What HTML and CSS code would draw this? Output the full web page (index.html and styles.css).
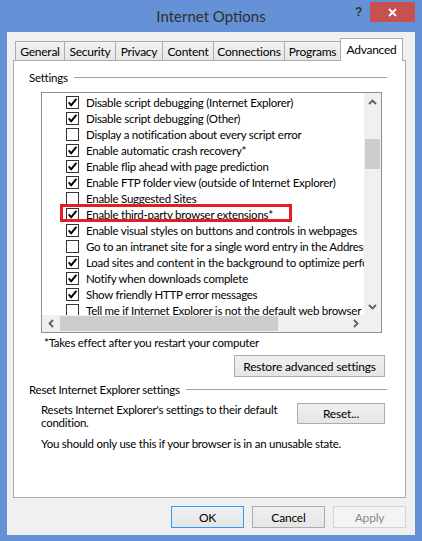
FILE: index.html
```html
<!DOCTYPE html>
<html>
<head>
<meta charset="utf-8">
<link rel="stylesheet" href="styles.css">
</head>
<body>
<div class="titlebar">
  <div></div>
  <div class="title">Internet Options</div>
  <div class="caption-btns">
    <span class="help">?</span>
    <span class="close"><svg width="9" height="9" viewBox="0 0 9 9"><path d="M1 1L8 8M8 1L1 8" stroke="#fff" stroke-width="1.8" fill="none"/></svg></span>
  </div>
</div>
<div class="client">
  <div class="tabs">
    <div class="tab w-general">General</div>
    <div class="tab w-security">Security</div>
    <div class="tab w-privacy">Privacy</div>
    <div class="tab w-content">Content</div>
    <div class="tab w-connections">Connections</div>
    <div class="tab w-programs">Programs</div>
    <div class="tab w-advanced active">Advanced</div>
  </div>
  <div class="panel">
    <div class="group-head"><span>Settings</span><span class="rule"></span></div>
    <div class="listbox">
      <div class="items">
        <div class="item"><span class="cb on"><svg width="11" height="11" viewBox="0 0 11 11"><path d="M1.6 5.4L4.2 8.2L9.4 1.9" stroke="#000" stroke-width="1.9" fill="none"/></svg></span>Disable script debugging (Internet Explorer)</div>
        <div class="item"><span class="cb on"><svg width="11" height="11" viewBox="0 0 11 11"><path d="M1.6 5.4L4.2 8.2L9.4 1.9" stroke="#000" stroke-width="1.9" fill="none"/></svg></span>Disable script debugging (Other)</div>
        <div class="item"><span class="cb"></span>Display a notification about every script error</div>
        <div class="item"><span class="cb on"><svg width="11" height="11" viewBox="0 0 11 11"><path d="M1.6 5.4L4.2 8.2L9.4 1.9" stroke="#000" stroke-width="1.9" fill="none"/></svg></span>Enable automatic crash recovery*</div>
        <div class="item"><span class="cb on"><svg width="11" height="11" viewBox="0 0 11 11"><path d="M1.6 5.4L4.2 8.2L9.4 1.9" stroke="#000" stroke-width="1.9" fill="none"/></svg></span>Enable flip ahead with page prediction</div>
        <div class="item"><span class="cb on"><svg width="11" height="11" viewBox="0 0 11 11"><path d="M1.6 5.4L4.2 8.2L9.4 1.9" stroke="#000" stroke-width="1.9" fill="none"/></svg></span>Enable FTP folder view (outside of Internet Explorer)</div>
        <div class="item"><span class="cb"></span>Enable Suggested Sites</div>
        <div class="item"><span class="cb on"><svg width="11" height="11" viewBox="0 0 11 11"><path d="M1.6 5.4L4.2 8.2L9.4 1.9" stroke="#000" stroke-width="1.9" fill="none"/></svg></span>Enable third-party browser extensions*<span class="mark"></span></div>
        <div class="item"><span class="cb on"><svg width="11" height="11" viewBox="0 0 11 11"><path d="M1.6 5.4L4.2 8.2L9.4 1.9" stroke="#000" stroke-width="1.9" fill="none"/></svg></span>Enable visual styles on buttons and controls in webpages</div>
        <div class="item"><span class="cb"></span>Go to an intranet site for a single word entry in the Address bar</div>
        <div class="item"><span class="cb on"><svg width="11" height="11" viewBox="0 0 11 11"><path d="M1.6 5.4L4.2 8.2L9.4 1.9" stroke="#000" stroke-width="1.9" fill="none"/></svg></span>Load sites and content in the background to optimize performance</div>
        <div class="item"><span class="cb on"><svg width="11" height="11" viewBox="0 0 11 11"><path d="M1.6 5.4L4.2 8.2L9.4 1.9" stroke="#000" stroke-width="1.9" fill="none"/></svg></span>Notify when downloads complete</div>
        <div class="item"><span class="cb on"><svg width="11" height="11" viewBox="0 0 11 11"><path d="M1.6 5.4L4.2 8.2L9.4 1.9" stroke="#000" stroke-width="1.9" fill="none"/></svg></span>Show friendly HTTP error messages</div>
        <div class="item"><span class="cb"></span>Tell me if Internet Explorer is not the default web browser</div>
      </div>
      <div class="vscroll">
        <div class="arrow"><svg width="9" height="6" viewBox="0 0 9 6"><path d="M1 5L4.5 1.5L8 5" stroke="#606060" stroke-width="1.8" fill="none"/></svg></div>
        <div class="vthumb"></div>
        <div class="fill"></div>
        <div class="arrow"><svg width="9" height="6" viewBox="0 0 9 6"><path d="M1 1L4.5 4.5L8 1" stroke="#606060" stroke-width="1.8" fill="none"/></svg></div>
      </div>
      <div class="hscroll">
        <div class="arrow"><svg width="6" height="9" viewBox="0 0 6 9"><path d="M5 1L1.5 4.5L5 8" stroke="#606060" stroke-width="1.8" fill="none"/></svg></div>
        <div class="hthumb"></div>
        <div class="fill"></div>
        <div class="arrow"><svg width="6" height="9" viewBox="0 0 6 9"><path d="M1 1L4.5 4.5L1 8" stroke="#606060" stroke-width="1.8" fill="none"/></svg></div>
      </div>
      <div class="corner"></div>
    </div>
    <div class="note">*Takes effect after you restart your computer</div>
    <div class="btn-row"><button class="btn restore">Restore advanced settings</button></div>
    <div class="group-head reset-head"><span>Reset Internet Explorer settings</span><span class="rule"></span></div>
    <div class="reset-row">
      <div class="reset-text">Resets Internet Explorer's settings to their default<br>condition.</div>
      <button class="btn reset">Reset...</button>
    </div>
    <div class="warn">You should only use this if your browser is in an unusable state.</div>
  </div>
  <div class="dlg-buttons">
    <button class="btn dlg default">OK</button>
    <button class="btn dlg">Cancel</button>
    <button class="btn dlg disabled">Apply</button>
  </div>
</div>
</body>
</html>
```
FILE: styles.css
```css
html, body {
  margin: 0;
  padding: 0;
}
body {
  width: 422px;
  height: 541px;
  overflow: hidden;
  background: #6591d6;
  font-family: Lato, "Noto Sans", sans-serif;
  font-size: 11.5px;
  letter-spacing: -0.25px;
  color: #000;
}
.titlebar {
  display: grid;
  grid-template-columns: 1fr auto 1fr;
  height: 32px;
  padding: 0 7px;
}
.title {
  align-self: center;
  font-size: 15px;
  letter-spacing: 0;
  color: #2e2e2e;
  padding-bottom: 1px;
}
.caption-btns {
  display: flex;
  justify-content: flex-end;
  align-items: flex-start;
}
.help {
  font-family: "Liberation Sans", sans-serif;
  font-weight: bold;
  font-size: 12px;
  color: #333;
  margin-top: 5px;
  margin-right: 8px;
}
.close {
  width: 45px;
  height: 20px;
  margin-top: 2px;
  background: #c75050;
  display: flex;
  align-items: center;
  justify-content: center;
}
.client {
  background: #f0f0f0;
  margin: 0 7px;
  height: 503px;
  box-sizing: border-box;
  padding: 6px 9px 0 6px;
}
.tabs {
  display: flex;
  align-items: flex-end;
  height: 22px;
  margin-left: 2px;
}
.tab {
  height: 19px;
  box-sizing: border-box;
  border: 1px solid #acacac;
  border-bottom: none;
  background: linear-gradient(#f2f2f2, #e6e6e6);
  display: flex;
  align-items: center;
  justify-content: center;
  margin-left: -1px;
  white-space: nowrap;
  font-size: 12px;
}
.tab:first-child { margin-left: 0; }
.w-general { width: 50px; }
.w-security { width: 52px; }
.w-privacy { width: 48px; }
.w-content { width: 52px; }
.w-connections { width: 72px; }
.w-programs { width: 57px; }
.w-advanced { width: 63px; }
.tab.active {
  height: 23px;
  margin-bottom: -1px;
  background: #fff;
  position: relative;
  z-index: 1;
  padding-bottom: 2px;
}
.panel {
  height: 438px;
  box-sizing: border-box;
  border: 1px solid #acacac;
  background: #fff;
  padding: 10px 18px 0 15px;
}
.group-head {
  display: flex;
  align-items: center;
  height: 14px;
  line-height: 14px;
}
.rule {
  flex: 1;
  border-top: 1px solid #a0a0a0;
  margin-left: 6px;
  margin-top: -1px;
}
.listbox {
  margin: 7px 0 0 12px;
  width: 341px;
  height: 241px;
  box-sizing: border-box;
  border: 1px solid #8e8f8f;
  display: grid;
  grid-template-columns: 1fr 17px;
  grid-template-rows: 1fr 17px;
}
.items {
  overflow: hidden;
  padding-top: 1px;
  min-width: 0;
}
.item {
  position: relative;
  display: flex;
  align-items: center;
  height: 16px;
  padding-left: 24px;
  white-space: nowrap;
}
.cb {
  flex: none;
  width: 13px;
  height: 13px;
  box-sizing: border-box;
  border: 1px solid #333;
  background: #fff;
  margin-right: 7px;
  display: flex;
}
.mark {
  position: absolute;
  left: 18px;
  top: -2px;
  width: 232px;
  height: 18px;
  box-sizing: border-box;
  border: 3px solid #e31e24;
}
.vscroll {
  background: #f0f0f0;
  display: flex;
  flex-direction: column;
}
.hscroll {
  background: #f0f0f0;
  display: flex;
}
.corner { background: #f0f0f0; }
.arrow {
  flex: none;
  width: 17px;
  height: 17px;
  display: flex;
  align-items: center;
  justify-content: center;
}
.fill { flex: 1; }
.vthumb {
  margin: 29px 1px 0;
  height: 30px;
  background: #cdcdcd;
}
.hthumb {
  margin: 1px 0 1px 1px;
  width: 218px;
  background: #cdcdcd;
}
.note {
  margin: 3px 0 0 15px;
  line-height: 14px;
}
.btn {
  font-family: inherit;
  font-size: 12px;
  letter-spacing: -0.2px;
  color: #000;
  border: 1px solid #acacac;
  background: linear-gradient(#f0f0f0, #e5e5e5);
  padding: 0;
  margin: 0;
  box-sizing: border-box;
  height: 22px;
}
.btn-row {
  display: flex;
  justify-content: flex-end;
  margin: 5px 2px 0 0;
}
.restore { width: 151px; }
.reset-head { margin-top: 6px; }
.reset-row {
  display: flex;
  justify-content: space-between;
  align-items: flex-start;
  margin: 6px 2px 0 12px;
}
.reset-text {
  line-height: 13px;
  white-space: nowrap;
}
.reset { width: 88px; height: 21px; margin-top: 0; }
.warn {
  margin: 8px 0 0 12px;
  line-height: 14px;
}
.dlg-buttons {
  display: flex;
  justify-content: flex-end;
  gap: 8px;
  margin-top: 8px;
}
.dlg { width: 73px; }
.default { border-color: #3399ff; }
.disabled {
  border-color: #d5d5d5;
  background: #f4f4f4;
  color: #8a8a8a;
}
```
